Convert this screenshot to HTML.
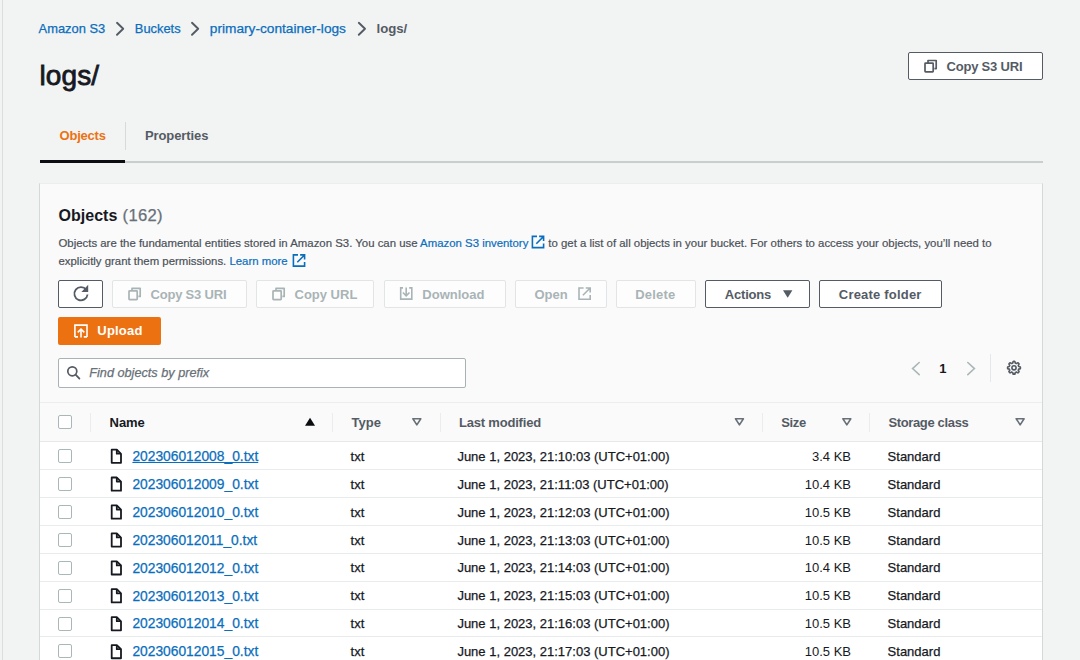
<!DOCTYPE html><html><head><meta charset="utf-8"><style>
*{box-sizing:border-box;margin:0;padding:0}
html,body{width:1080px;height:660px;overflow:hidden}
body{background:#f2f3f3;font-family:"Liberation Sans",sans-serif;color:#16191f;position:relative}
.a{position:absolute;white-space:nowrap}
svg{position:absolute;left:0;top:0;overflow:visible}
</style></head><body>
<div class="a" style="left:2px;top:0px;width:1px;height:660px;background:#d9dede"></div>
<div class="a" style="left:38.6px;top:22.74px;font-size:12.9px;line-height:12.9px;font-weight:400;color:#0a6ebd;;-webkit-text-stroke:0.25px #0a6ebd">Amazon S3</div>
<div class="a" style="left:134.8px;top:22.74px;font-size:12.9px;line-height:12.9px;font-weight:400;color:#0a6ebd;;-webkit-text-stroke:0.25px #0a6ebd">Buckets</div>
<div class="a" style="left:209.8px;top:22.06px;font-size:13.7px;line-height:13.7px;font-weight:400;color:#0a6ebd;;-webkit-text-stroke:0.25px #0a6ebd">primary-container-logs</div>
<div class="a" style="left:376.5px;top:22.48px;font-size:13.2px;line-height:13.2px;font-weight:700;color:#545b64;">logs/</div>
<div class="a" style="left:39.4px;top:61.70px;font-size:28px;line-height:28px;font-weight:400;color:#16191f;-webkit-text-stroke:0.8px #16191f;letter-spacing:0.15px">logs/</div>
<div class="a" style="left:908px;top:52px;width:135px;height:28px;border:1.4px solid #545b64;border-radius:2px;background:#fff"></div>
<div class="a" style="left:946.5px;top:59.95px;font-size:13px;line-height:13px;font-weight:700;color:#545b64;letter-spacing:-0.2px">Copy S3 URI</div>
<div class="a" style="left:59.5px;top:129.35px;font-size:13px;line-height:13px;font-weight:700;color:#ec7211;letter-spacing:-0.2px">Objects</div>
<div class="a" style="left:125px;top:122px;width:1px;height:28px;background:#d5dbdb"></div>
<div class="a" style="left:145px;top:129.35px;font-size:13px;line-height:13px;font-weight:700;color:#545b64;letter-spacing:-0.1px">Properties</div>
<div class="a" style="left:40px;top:161px;width:1003px;height:2px;background:#c9cfcf"></div>
<div class="a" style="left:40px;top:160px;width:85px;height:3px;background:#0b0d10"></div>
<div class="a" style="left:39px;top:183px;width:1004px;height:500px;background:#fafafa;border-left:1px solid #d3d8d8;border-right:1px solid #d3d8d8;border-top:1px solid #eceeee"></div>
<div class="a" style="left:58.6px;top:208.40px;font-size:16px;line-height:16px;font-weight:700;color:#16191f;">Objects</div>
<div class="a" style="left:122.6px;top:207.89px;font-size:16.6px;line-height:16.6px;font-weight:400;color:#687078;letter-spacing:0.3px;-webkit-text-stroke:0.25px #687078">(162)</div>
<div class="a" style="left:58.5px;top:233.6px;font-size:11.4px;line-height:18.5px;color:#4b5159;-webkit-text-stroke:0.2px #4b5159;white-space:normal;width:960px">Objects are the fundamental entities stored in Amazon S3. You can use <span style="color:#0a6ebd;-webkit-text-stroke:0.2px #0a6ebd">Amazon S3 inventory</span><span style="display:inline-block;width:20px"></span>to get a list of all objects in your bucket. For others to access your objects, you’ll need to explicitly grant them permissions. <span style="color:#0a6ebd;-webkit-text-stroke:0.2px #0a6ebd">Learn more</span></div>
<div class="a" style="left:58px;top:280px;width:45px;height:28px;border:1.4px solid #545b64;border-radius:2px;background:#fff"></div>
<div class="a" style="left:112px;top:280px;width:135px;height:28px;border:1px solid #e1e5e5;border-radius:2px;background:#fdfdfd"></div>
<div class="a" style="left:150.5px;top:287.55px;font-size:13px;line-height:13px;font-weight:700;color:#a9b4b6;letter-spacing:-0.2px">Copy S3 URI</div>
<div class="a" style="left:256px;top:280px;width:118px;height:28px;border:1px solid #e1e5e5;border-radius:2px;background:#fdfdfd"></div>
<div class="a" style="left:294.5px;top:287.55px;font-size:13px;line-height:13px;font-weight:700;color:#a9b4b6;">Copy URL</div>
<div class="a" style="left:384px;top:280px;width:121.5px;height:28px;border:1px solid #e1e5e5;border-radius:2px;background:#fdfdfd"></div>
<div class="a" style="left:422.3px;top:287.55px;font-size:13px;line-height:13px;font-weight:700;color:#a9b4b6;">Download</div>
<div class="a" style="left:515px;top:280px;width:91.5px;height:28px;border:1px solid #e1e5e5;border-radius:2px;background:#fdfdfd"></div>
<div class="a" style="left:534.5px;top:287.55px;font-size:13px;line-height:13px;font-weight:700;color:#a9b4b6;">Open</div>
<div class="a" style="left:616px;top:280px;width:79.5px;height:28px;border:1px solid #e1e5e5;border-radius:2px;background:#fdfdfd"></div>
<div class="a" style="left:635.2px;top:287.55px;font-size:13px;line-height:13px;font-weight:700;color:#a9b4b6;letter-spacing:0.2px">Delete</div>
<div class="a" style="left:705px;top:280px;width:105px;height:28px;border:1.4px solid #545b64;border-radius:2px;background:#fff"></div>
<div class="a" style="left:724.8px;top:287.55px;font-size:13px;line-height:13px;font-weight:700;color:#545b64;letter-spacing:-0.2px">Actions</div>
<div class="a" style="left:819px;top:280px;width:122.5px;height:28px;border:1.4px solid #545b64;border-radius:2px;background:#fff"></div>
<div class="a" style="left:838.8px;top:287.55px;font-size:13px;line-height:13px;font-weight:700;color:#545b64;letter-spacing:0.2px">Create folder</div>
<div class="a" style="left:58px;top:317px;width:103px;height:28px;background:#ec7211;border-radius:2px"></div>
<div class="a" style="left:97.3px;top:324.25px;font-size:13px;line-height:13px;font-weight:700;color:#fff;letter-spacing:0.2px">Upload</div>
<div class="a" style="left:58px;top:358px;width:408px;height:30px;border:1px solid #a9b2b4;border-radius:2px;background:#fff"></div>
<div class="a" style="left:89.3px;top:366.70px;font-size:12.7px;line-height:12.7px;font-weight:400;color:#687078;font-style:italic;-webkit-text-stroke:0.25px #687078">Find objects by prefix</div>
<div class="a" style="left:939.2px;top:361.95px;font-size:13px;line-height:13px;font-weight:700;color:#16191f;">1</div>
<div class="a" style="left:990px;top:354px;width:1px;height:28px;background:#e4e8e8"></div>
<div class="a" style="left:40px;top:402px;width:1002px;height:40px;background:#fafafa;border-top:1px solid #eceeee;border-bottom:1px solid #e6e9e9"></div>
<div class="a" style="left:58px;top:415px;width:14px;height:14px;border:1.2px solid #aab7b8;border-radius:2px;background:#fff"></div>
<div class="a" style="left:90px;top:413px;width:1px;height:19px;background:#eaeded"></div>
<div class="a" style="left:332px;top:413px;width:1px;height:19px;background:#eaeded"></div>
<div class="a" style="left:440px;top:413px;width:1px;height:19px;background:#eaeded"></div>
<div class="a" style="left:762px;top:413px;width:1px;height:19px;background:#eaeded"></div>
<div class="a" style="left:869px;top:413px;width:1px;height:19px;background:#eaeded"></div>
<div class="a" style="left:109.6px;top:415.75px;font-size:13px;line-height:13px;font-weight:700;color:#16191f;letter-spacing:-0.1px">Name</div>
<div class="a" style="left:351.5px;top:415.75px;font-size:13px;line-height:13px;font-weight:700;color:#545b64;">Type</div>
<div class="a" style="left:459px;top:415.75px;font-size:13px;line-height:13px;font-weight:700;color:#545b64;letter-spacing:-0.2px">Last modified</div>
<div class="a" style="left:781.2px;top:415.75px;font-size:13px;line-height:13px;font-weight:700;color:#545b64;letter-spacing:-0.3px">Size</div>
<div class="a" style="left:888.4px;top:415.75px;font-size:13px;line-height:13px;font-weight:700;color:#545b64;letter-spacing:-0.35px">Storage class</div>
<div class="a" style="left:40px;top:442.0px;width:1002px;height:27.92px;background:#fff;border-bottom:1px solid #e9ecec"></div>
<div class="a" style="left:58px;top:449.0px;width:14px;height:14px;border:1.2px solid #aab7b8;border-radius:2px;background:#fff"></div>
<div class="a" style="left:132.4px;top:449.97px;font-size:13.8px;line-height:13.8px;font-weight:400;color:#0a6ebd;text-decoration:underline;-webkit-text-stroke:0.25px #0a6ebd">202306012008_0.txt</div>
<div class="a" style="left:350.6px;top:449.75px;font-size:13px;line-height:13px;font-weight:400;color:#16191f;;-webkit-text-stroke:0.25px #16191f">txt</div>
<div class="a" style="left:457.4px;top:449.75px;font-size:13px;line-height:13px;font-weight:400;color:#16191f;;-webkit-text-stroke:0.25px #16191f">June 1, 2023, 21:10:03 (UTC+01:00)</div>
<div class="a" style="right:229px;top:449.75px;font-size:13px;line-height:13px;color:#16191f">3.4 KB</div>
<div class="a" style="left:887.6px;top:449.75px;font-size:13px;line-height:13px;font-weight:400;color:#16191f;;-webkit-text-stroke:0.25px #16191f">Standard</div>
<div class="a" style="left:40px;top:469.92px;width:1002px;height:27.92px;background:#fff;border-bottom:1px solid #e9ecec"></div>
<div class="a" style="left:58px;top:476.92px;width:14px;height:14px;border:1.2px solid #aab7b8;border-radius:2px;background:#fff"></div>
<div class="a" style="left:132.4px;top:477.89px;font-size:13.8px;line-height:13.8px;font-weight:400;color:#0a6ebd;;-webkit-text-stroke:0.25px #0a6ebd">202306012009_0.txt</div>
<div class="a" style="left:350.6px;top:477.67px;font-size:13px;line-height:13px;font-weight:400;color:#16191f;;-webkit-text-stroke:0.25px #16191f">txt</div>
<div class="a" style="left:457.4px;top:477.67px;font-size:13px;line-height:13px;font-weight:400;color:#16191f;;-webkit-text-stroke:0.25px #16191f">June 1, 2023, 21:11:03 (UTC+01:00)</div>
<div class="a" style="right:229px;top:477.67px;font-size:13px;line-height:13px;color:#16191f">10.4 KB</div>
<div class="a" style="left:887.6px;top:477.67px;font-size:13px;line-height:13px;font-weight:400;color:#16191f;;-webkit-text-stroke:0.25px #16191f">Standard</div>
<div class="a" style="left:40px;top:497.84000000000003px;width:1002px;height:27.92px;background:#fff;border-bottom:1px solid #e9ecec"></div>
<div class="a" style="left:58px;top:504.84px;width:14px;height:14px;border:1.2px solid #aab7b8;border-radius:2px;background:#fff"></div>
<div class="a" style="left:132.4px;top:505.81px;font-size:13.8px;line-height:13.8px;font-weight:400;color:#0a6ebd;;-webkit-text-stroke:0.25px #0a6ebd">202306012010_0.txt</div>
<div class="a" style="left:350.6px;top:505.59px;font-size:13px;line-height:13px;font-weight:400;color:#16191f;;-webkit-text-stroke:0.25px #16191f">txt</div>
<div class="a" style="left:457.4px;top:505.59px;font-size:13px;line-height:13px;font-weight:400;color:#16191f;;-webkit-text-stroke:0.25px #16191f">June 1, 2023, 21:12:03 (UTC+01:00)</div>
<div class="a" style="right:229px;top:505.59px;font-size:13px;line-height:13px;color:#16191f">10.5 KB</div>
<div class="a" style="left:887.6px;top:505.59px;font-size:13px;line-height:13px;font-weight:400;color:#16191f;;-webkit-text-stroke:0.25px #16191f">Standard</div>
<div class="a" style="left:40px;top:525.76px;width:1002px;height:27.92px;background:#fff;border-bottom:1px solid #e9ecec"></div>
<div class="a" style="left:58px;top:532.7600000000001px;width:14px;height:14px;border:1.2px solid #aab7b8;border-radius:2px;background:#fff"></div>
<div class="a" style="left:132.4px;top:533.73px;font-size:13.8px;line-height:13.8px;font-weight:400;color:#0a6ebd;;-webkit-text-stroke:0.25px #0a6ebd">202306012011_0.txt</div>
<div class="a" style="left:350.6px;top:533.51px;font-size:13px;line-height:13px;font-weight:400;color:#16191f;;-webkit-text-stroke:0.25px #16191f">txt</div>
<div class="a" style="left:457.4px;top:533.51px;font-size:13px;line-height:13px;font-weight:400;color:#16191f;;-webkit-text-stroke:0.25px #16191f">June 1, 2023, 21:13:03 (UTC+01:00)</div>
<div class="a" style="right:229px;top:533.51px;font-size:13px;line-height:13px;color:#16191f">10.5 KB</div>
<div class="a" style="left:887.6px;top:533.51px;font-size:13px;line-height:13px;font-weight:400;color:#16191f;;-webkit-text-stroke:0.25px #16191f">Standard</div>
<div class="a" style="left:40px;top:553.6800000000001px;width:1002px;height:27.92px;background:#fff;border-bottom:1px solid #e9ecec"></div>
<div class="a" style="left:58px;top:560.6800000000001px;width:14px;height:14px;border:1.2px solid #aab7b8;border-radius:2px;background:#fff"></div>
<div class="a" style="left:132.4px;top:561.65px;font-size:13.8px;line-height:13.8px;font-weight:400;color:#0a6ebd;;-webkit-text-stroke:0.25px #0a6ebd">202306012012_0.txt</div>
<div class="a" style="left:350.6px;top:561.43px;font-size:13px;line-height:13px;font-weight:400;color:#16191f;;-webkit-text-stroke:0.25px #16191f">txt</div>
<div class="a" style="left:457.4px;top:561.43px;font-size:13px;line-height:13px;font-weight:400;color:#16191f;;-webkit-text-stroke:0.25px #16191f">June 1, 2023, 21:14:03 (UTC+01:00)</div>
<div class="a" style="right:229px;top:561.43px;font-size:13px;line-height:13px;color:#16191f">10.4 KB</div>
<div class="a" style="left:887.6px;top:561.43px;font-size:13px;line-height:13px;font-weight:400;color:#16191f;;-webkit-text-stroke:0.25px #16191f">Standard</div>
<div class="a" style="left:40px;top:581.6px;width:1002px;height:27.92px;background:#fff;border-bottom:1px solid #e9ecec"></div>
<div class="a" style="left:58px;top:588.6000000000001px;width:14px;height:14px;border:1.2px solid #aab7b8;border-radius:2px;background:#fff"></div>
<div class="a" style="left:132.4px;top:589.57px;font-size:13.8px;line-height:13.8px;font-weight:400;color:#0a6ebd;;-webkit-text-stroke:0.25px #0a6ebd">202306012013_0.txt</div>
<div class="a" style="left:350.6px;top:589.35px;font-size:13px;line-height:13px;font-weight:400;color:#16191f;;-webkit-text-stroke:0.25px #16191f">txt</div>
<div class="a" style="left:457.4px;top:589.35px;font-size:13px;line-height:13px;font-weight:400;color:#16191f;;-webkit-text-stroke:0.25px #16191f">June 1, 2023, 21:15:03 (UTC+01:00)</div>
<div class="a" style="right:229px;top:589.35px;font-size:13px;line-height:13px;color:#16191f">10.5 KB</div>
<div class="a" style="left:887.6px;top:589.35px;font-size:13px;line-height:13px;font-weight:400;color:#16191f;;-webkit-text-stroke:0.25px #16191f">Standard</div>
<div class="a" style="left:40px;top:609.52px;width:1002px;height:27.92px;background:#fff;border-bottom:1px solid #e9ecec"></div>
<div class="a" style="left:58px;top:616.5200000000001px;width:14px;height:14px;border:1.2px solid #aab7b8;border-radius:2px;background:#fff"></div>
<div class="a" style="left:132.4px;top:617.49px;font-size:13.8px;line-height:13.8px;font-weight:400;color:#0a6ebd;;-webkit-text-stroke:0.25px #0a6ebd">202306012014_0.txt</div>
<div class="a" style="left:350.6px;top:617.27px;font-size:13px;line-height:13px;font-weight:400;color:#16191f;;-webkit-text-stroke:0.25px #16191f">txt</div>
<div class="a" style="left:457.4px;top:617.27px;font-size:13px;line-height:13px;font-weight:400;color:#16191f;;-webkit-text-stroke:0.25px #16191f">June 1, 2023, 21:16:03 (UTC+01:00)</div>
<div class="a" style="right:229px;top:617.27px;font-size:13px;line-height:13px;color:#16191f">10.5 KB</div>
<div class="a" style="left:887.6px;top:617.27px;font-size:13px;line-height:13px;font-weight:400;color:#16191f;;-webkit-text-stroke:0.25px #16191f">Standard</div>
<div class="a" style="left:40px;top:637.44px;width:1002px;height:27.92px;background:#fff;border-bottom:1px solid #e9ecec"></div>
<div class="a" style="left:58px;top:644.44px;width:14px;height:14px;border:1.2px solid #aab7b8;border-radius:2px;background:#fff"></div>
<div class="a" style="left:132.4px;top:645.41px;font-size:13.8px;line-height:13.8px;font-weight:400;color:#0a6ebd;;-webkit-text-stroke:0.25px #0a6ebd">202306012015_0.txt</div>
<div class="a" style="left:350.6px;top:645.19px;font-size:13px;line-height:13px;font-weight:400;color:#16191f;;-webkit-text-stroke:0.25px #16191f">txt</div>
<div class="a" style="left:457.4px;top:645.19px;font-size:13px;line-height:13px;font-weight:400;color:#16191f;;-webkit-text-stroke:0.25px #16191f">June 1, 2023, 21:17:03 (UTC+01:00)</div>
<div class="a" style="right:229px;top:645.19px;font-size:13px;line-height:13px;color:#16191f">10.5 KB</div>
<div class="a" style="left:887.6px;top:645.19px;font-size:13px;line-height:13px;font-weight:400;color:#16191f;;-webkit-text-stroke:0.25px #16191f">Standard</div>
<svg width="1080" height="660" viewBox="0 0 1080 660" style="position:absolute;left:0;top:0"><path d="M117 22.8 L123.2 28.8 L117 34.8" fill="none" stroke="#545b64" stroke-width="1.9" stroke-linecap="round" stroke-linejoin="round"/>
<path d="M192 22.8 L198.2 28.8 L192 34.8" fill="none" stroke="#545b64" stroke-width="1.9" stroke-linecap="round" stroke-linejoin="round"/>
<path d="M358.8 22.8 L365.0 28.8 L358.8 34.8" fill="none" stroke="#545b64" stroke-width="1.9" stroke-linecap="round" stroke-linejoin="round"/>
<path d="M928.0 63.2 V60.5 H936.2 V68.6 H934.4" fill="none" stroke="#545b64" stroke-width="1.7" stroke-linejoin="round"/><rect x="925.0" y="63.1" width="8.2" height="8.8" rx="0.6" fill="none" stroke="#545b64" stroke-width="1.7"/>
<path d="M537.0 236.4 H532.4 V247.6 H543.6 V243.4" fill="none" stroke="#0a6ebd" stroke-width="1.6"/><path d="M536.3 243.7 L543.3 236.7 M539.1 236.4 H543.6 V241.0" fill="none" stroke="#0a6ebd" stroke-width="1.6"/>
<path d="M298.0 254.9 H293.4 V266.1 H304.6 V261.9" fill="none" stroke="#0a6ebd" stroke-width="1.6"/><path d="M297.3 262.2 L304.3 255.2 M300.1 254.9 H304.6 V259.5" fill="none" stroke="#0a6ebd" stroke-width="1.6"/>
<path d="M87.55 294.5 A6.6 6.6 0 1 1 86.27 289.73" fill="none" stroke="#545b64" stroke-width="1.8"/><path d="M87.6 286.2 V291.3 H82.8 Z" fill="#545b64" stroke="#545b64" stroke-width="1.2" stroke-linejoin="miter"/>
<path d="M132.0 291.0 V288.29999999999995 H140.2 V296.4 H138.4" fill="none" stroke="#a9b4b6" stroke-width="1.7" stroke-linejoin="round"/><rect x="129.0" y="290.9" width="8.2" height="8.8" rx="0.6" fill="none" stroke="#a9b4b6" stroke-width="1.7"/>
<path d="M276.0 291.0 V288.29999999999995 H284.20000000000005 V296.4 H282.40000000000003" fill="none" stroke="#a9b4b6" stroke-width="1.7" stroke-linejoin="round"/><rect x="273.0" y="290.9" width="8.2" height="8.8" rx="0.6" fill="none" stroke="#a9b4b6" stroke-width="1.7"/>
<path d="M403 287.9 H400.7 V299.1 H411.8 V287.9 H409.2" fill="none" stroke="#a9b4b6" stroke-width="1.6"/><path d="M406.2 287.5 V295.6 M402.9 292.5 L406.2 295.8 L409.5 292.5" fill="none" stroke="#a9b4b6" stroke-width="1.6"/>
<path d="M583.6 288.0 H579.0 V299.20000000000005 H590.2 V295.0" fill="none" stroke="#a9b4b6" stroke-width="1.6"/><path d="M582.9 295.3 L589.9 288.3 M585.7 288.0 H590.2 V292.6" fill="none" stroke="#a9b4b6" stroke-width="1.6"/>
<path d="M783 290.3 H792.4 L787.7 297.7 Z" fill="#545b64"/>
<path d="M74.9 336.9 V325.1 H87 V336.9 M78 336.9 H74.9 M87 336.9 H83.8" fill="none" stroke="#fff" stroke-width="1.6"/><path d="M81 337.5 V329.2 M77.7 332.4 L81 329.1 L84.3 332.4" fill="none" stroke="#fff" stroke-width="1.6"/>
<circle cx="72.3" cy="371.3" r="4.5" fill="none" stroke="#545b64" stroke-width="1.7"/><path d="M75.6 374.6 L79.4 378.6" stroke="#545b64" stroke-width="1.8" stroke-linecap="round"/>
<path d="M919.2 362.5 L912.6 368.6 L919.2 374.7" fill="none" stroke="#aab7b8" stroke-width="1.6" stroke-linecap="round"/>
<path d="M967.8 362.5 L974.4 368.6 L967.8 374.7" fill="none" stroke="#aab7b8" stroke-width="1.6" stroke-linecap="round"/>
<path d="M1020.40 367.80 L1020.39 368.22 L1020.35 368.64 L1019.54 368.90 L1018.73 369.07 L1018.64 369.38 L1018.53 369.68 L1018.39 369.97 L1018.24 370.25 L1018.70 370.94 L1019.08 371.70 L1018.81 372.02 L1018.53 372.33 L1018.22 372.61 L1017.90 372.88 L1017.14 372.50 L1016.45 372.04 L1016.17 372.19 L1015.88 372.33 L1015.58 372.44 L1015.27 372.53 L1015.10 373.34 L1014.84 374.15 L1014.42 374.19 L1014.00 374.20 L1013.58 374.19 L1013.16 374.15 L1012.90 373.34 L1012.73 372.53 L1012.42 372.44 L1012.12 372.33 L1011.83 372.19 L1011.55 372.04 L1010.86 372.50 L1010.10 372.88 L1009.78 372.61 L1009.47 372.33 L1009.19 372.02 L1008.92 371.70 L1009.30 370.94 L1009.76 370.25 L1009.61 369.97 L1009.47 369.68 L1009.36 369.38 L1009.27 369.07 L1008.46 368.90 L1007.65 368.64 L1007.61 368.22 L1007.60 367.80 L1007.61 367.38 L1007.65 366.96 L1008.46 366.70 L1009.27 366.53 L1009.36 366.22 L1009.47 365.92 L1009.61 365.63 L1009.76 365.35 L1009.30 364.66 L1008.92 363.90 L1009.19 363.58 L1009.47 363.27 L1009.78 362.99 L1010.10 362.72 L1010.86 363.10 L1011.55 363.56 L1011.83 363.41 L1012.12 363.27 L1012.42 363.16 L1012.73 363.07 L1012.90 362.26 L1013.16 361.45 L1013.58 361.41 L1014.00 361.40 L1014.42 361.41 L1014.84 361.45 L1015.10 362.26 L1015.27 363.07 L1015.58 363.16 L1015.88 363.27 L1016.17 363.41 L1016.45 363.56 L1017.14 363.10 L1017.90 362.72 L1018.22 362.99 L1018.53 363.27 L1018.81 363.58 L1019.08 363.90 L1018.70 364.66 L1018.24 365.35 L1018.39 365.63 L1018.53 365.92 L1018.64 366.22 L1018.73 366.53 L1019.54 366.70 L1020.35 366.96 L1020.39 367.38 Z" fill="none" stroke="#545b64" stroke-width="1.6" stroke-linejoin="round"/><circle cx="1014" cy="367.8" r="2.1" fill="none" stroke="#545b64" stroke-width="1.6"/>
<path d="M305 425.7 H315 L310 417.8 Z" fill="#0b0d10"/>
<path d="M412.9 418.7 H420.8 L416.85 424.9 Z" fill="none" stroke="#687078" stroke-width="1.6" stroke-linejoin="round"/>
<path d="M735.5 418.7 H743.4 L739.45 424.9 Z" fill="none" stroke="#687078" stroke-width="1.6" stroke-linejoin="round"/>
<path d="M842.9 418.7 H850.8 L846.85 424.9 Z" fill="none" stroke="#687078" stroke-width="1.6" stroke-linejoin="round"/>
<path d="M1016.1999999999999 418.7 H1024.1 L1020.15 424.9 Z" fill="none" stroke="#687078" stroke-width="1.6" stroke-linejoin="round"/>
<path d="M111.7 449.6 H116.8 L121 453.8 V462.8 H111.7 Z" fill="none" stroke="#16191f" stroke-width="1.8" stroke-linejoin="round"/><path d="M116.8 449.6 V453.7 H121" fill="none" stroke="#16191f" stroke-width="1.8" stroke-linejoin="round"/>
<path d="M111.7 477.52000000000004 H116.8 L121 481.72 V490.72 H111.7 Z" fill="none" stroke="#16191f" stroke-width="1.8" stroke-linejoin="round"/><path d="M116.8 477.52000000000004 V481.62 H121" fill="none" stroke="#16191f" stroke-width="1.8" stroke-linejoin="round"/>
<path d="M111.7 505.44 H116.8 L121 509.64 V518.64 H111.7 Z" fill="none" stroke="#16191f" stroke-width="1.8" stroke-linejoin="round"/><path d="M116.8 505.44 V509.53999999999996 H121" fill="none" stroke="#16191f" stroke-width="1.8" stroke-linejoin="round"/>
<path d="M111.7 533.36 H116.8 L121 537.5600000000001 V546.5600000000001 H111.7 Z" fill="none" stroke="#16191f" stroke-width="1.8" stroke-linejoin="round"/><path d="M116.8 533.36 V537.46 H121" fill="none" stroke="#16191f" stroke-width="1.8" stroke-linejoin="round"/>
<path d="M111.7 561.28 H116.8 L121 565.48 V574.48 H111.7 Z" fill="none" stroke="#16191f" stroke-width="1.8" stroke-linejoin="round"/><path d="M116.8 561.28 V565.38 H121" fill="none" stroke="#16191f" stroke-width="1.8" stroke-linejoin="round"/>
<path d="M111.7 589.2 H116.8 L121 593.4000000000001 V602.4000000000001 H111.7 Z" fill="none" stroke="#16191f" stroke-width="1.8" stroke-linejoin="round"/><path d="M116.8 589.2 V593.3000000000001 H121" fill="none" stroke="#16191f" stroke-width="1.8" stroke-linejoin="round"/>
<path d="M111.7 617.12 H116.8 L121 621.32 V630.32 H111.7 Z" fill="none" stroke="#16191f" stroke-width="1.8" stroke-linejoin="round"/><path d="M116.8 617.12 V621.22 H121" fill="none" stroke="#16191f" stroke-width="1.8" stroke-linejoin="round"/>
<path d="M111.7 645.04 H116.8 L121 649.24 V658.24 H111.7 Z" fill="none" stroke="#16191f" stroke-width="1.8" stroke-linejoin="round"/><path d="M116.8 645.04 V649.14 H121" fill="none" stroke="#16191f" stroke-width="1.8" stroke-linejoin="round"/></svg>
</body></html>
